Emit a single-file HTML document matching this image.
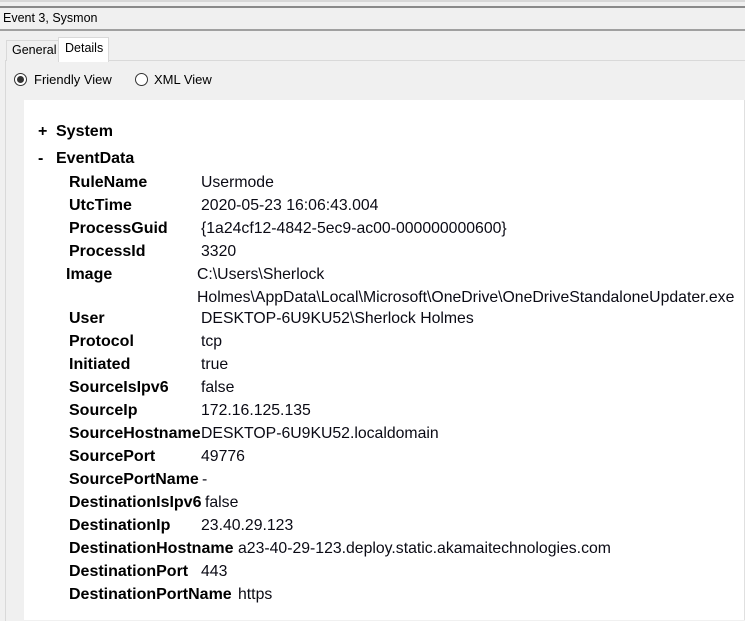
<!DOCTYPE html>
<html><head><meta charset="utf-8"><style>
body{margin:0;width:745px;height:612px;background:#f0f0f0;font-family:"Liberation Sans",sans-serif;position:relative;overflow:hidden;color:#000}
.a{position:absolute;white-space:nowrap}
.l{font-weight:bold;font-size:16px;line-height:20px}
.v{font-size:15.8px;line-height:20px;color:#0a0a14}
</style></head><body>
<div class="a" style="left:0;top:0;width:745px;height:2px;background:#d8d8d8"></div>
<div class="a" style="left:0;top:6px;width:745px;height:2px;background:#8a8a8a"></div>
<div class="a" style="left:3px;top:10px;font-size:12.5px;line-height:16px">Event 3, Sysmon</div>
<div class="a" style="left:0;top:29px;width:745px;height:2px;background:#a0a0a0"></div>
<div class="a" style="left:5px;top:60px;width:745px;height:560px;border-left:1px solid #d9d9d9;border-top:1px solid #d9d9d9;background:#f0f0f0"></div>
<div class="a" style="left:6px;top:40px;width:51px;height:20px;border:1px solid #d9d9d9;border-bottom:none;background:#f0f0f0"></div>
<div class="a" style="left:12px;top:43px;font-size:12.5px">General</div>
<div class="a" style="left:58px;top:37px;width:49px;height:24px;border:1px solid #d9d9d9;border-bottom:none;background:#fff"></div>
<div class="a" style="left:65px;top:41px;font-size:12.5px">Details</div>
<div class="a" style="left:14px;top:73px;width:11px;height:11px;border:1px solid #333;border-radius:50%;background:#fff"></div>
<div class="a" style="left:17px;top:76px;width:7px;height:7px;border-radius:50%;background:#333"></div>
<div class="a" style="left:34px;top:72px;font-size:13px">Friendly View</div>
<div class="a" style="left:135px;top:73px;width:11px;height:11px;border:1px solid #333;border-radius:50%;background:#fff"></div>
<div class="a" style="left:154px;top:72px;font-size:13px">XML View</div>
<div class="a" style="left:24px;top:100px;width:720px;height:520px;background:#fff;border-right:1px solid #e0e0e0"></div>
<div class="a l" style="left:38px;top:122px">+</div>
<div class="a l" style="left:56px;top:122px">System</div>
<div class="a l" style="left:38px;top:149px">-</div>
<div class="a l" style="left:56px;top:149px">EventData</div>

<div class="a l" style="left:69px;top:173px">RuleName</div><div class="a v" style="left:201px;top:173px">Usermode</div>
<div class="a l" style="left:69px;top:196px">UtcTime</div><div class="a v" style="left:201px;top:196px">2020-05-23 16:06:43.004</div>
<div class="a l" style="left:69px;top:219px">ProcessGuid</div><div class="a v" style="left:201px;top:219px">{1a24cf12-4842-5ec9-ac00-000000000600}</div>
<div class="a l" style="left:69px;top:242px">ProcessId</div><div class="a v" style="left:201px;top:242px">3320</div>
<div class="a l" style="left:66px;top:265px">Image</div><div class="a v" style="left:197px;top:265px">C:\Users\Sherlock</div>
<div class="a v" style="left:197px;top:288px">Holmes\AppData\Local\Microsoft\OneDrive\OneDriveStandaloneUpdater.exe</div>
<div class="a l" style="left:69px;top:309px">User</div><div class="a v" style="left:201px;top:309px">DESKTOP-6U9KU52\Sherlock Holmes</div>
<div class="a l" style="left:69px;top:332px">Protocol</div><div class="a v" style="left:201px;top:332px">tcp</div>
<div class="a l" style="left:69px;top:355px">Initiated</div><div class="a v" style="left:201px;top:355px">true</div>
<div class="a l" style="left:69px;top:378px">SourceIsIpv6</div><div class="a v" style="left:201px;top:378px">false</div>
<div class="a l" style="left:69px;top:401px">SourceIp</div><div class="a v" style="left:201px;top:401px">172.16.125.135</div>
<div class="a l" style="left:69px;top:424px">SourceHostname</div><div class="a v" style="left:201px;top:424px">DESKTOP-6U9KU52.localdomain</div>
<div class="a l" style="left:69px;top:447px">SourcePort</div><div class="a v" style="left:201px;top:447px">49776</div>
<div class="a l" style="left:69px;top:470px">SourcePortName</div><div class="a v" style="left:202px;top:470px">-</div>
<div class="a l" style="left:69px;top:493px">DestinationIsIpv6</div><div class="a v" style="left:205px;top:493px">false</div>
<div class="a l" style="left:69px;top:516px">DestinationIp</div><div class="a v" style="left:201px;top:516px">23.40.29.123</div>
<div class="a l" style="left:69px;top:539px">DestinationHostname</div><div class="a v" style="left:238px;top:539px">a23-40-29-123.deploy.static.akamaitechnologies.com</div>
<div class="a l" style="left:69px;top:562px">DestinationPort</div><div class="a v" style="left:201px;top:562px">443</div>
<div class="a l" style="left:69px;top:585px">DestinationPortName</div><div class="a v" style="left:238px;top:585px">https</div>
</body></html>
